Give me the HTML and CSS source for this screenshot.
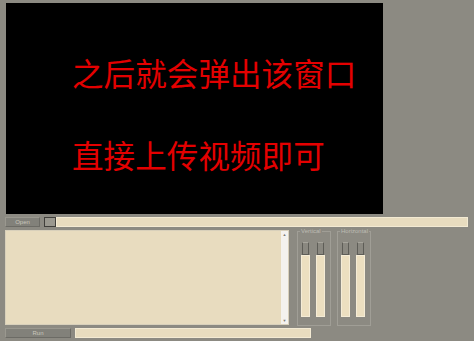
FILE: index.html
```html
<!DOCTYPE html>
<html>
<head>
<meta charset="utf-8">
<link rel="stylesheet" href="styles.css">
</head>
<body>
<div class="app">
  <div class="video">
    <p class="line l1">之后就会弹出该窗口</p>
    <p class="line l2">直接上传视频即可</p>
  </div>
  <div class="row open-row">
    <div class="btn open">Open</div>
    <div class="mini"></div>
    <div class="bar seek"></div>
  </div>
  <div class="row mid">
    <div class="text">
      <div class="scroll"><span class="arr">▲</span><span class="arr">▼</span></div>
    </div>
    <div class="group">
      <span class="legend">Vertical</span>
      <div class="slider"><div class="thumb"></div><div class="track"></div></div>
      <div class="slider"><div class="thumb"></div><div class="track"></div></div>
    </div>
    <div class="group">
      <span class="legend">Horizontal</span>
      <div class="slider"><div class="thumb"></div><div class="track"></div></div>
      <div class="slider"><div class="thumb"></div><div class="track"></div></div>
    </div>
  </div>
  <div class="row run-row">
    <div class="btn run">Run</div>
    <div class="bar status"></div>
  </div>
</div>
</body>
</html>
```
FILE: styles.css
```css
html, body {
  margin: 0;
  padding: 0;
  background: #8c8a82;
  width: 474px;
  height: 341px;
  overflow: hidden;
  font-family: "Liberation Sans", Arial, sans-serif;
}
.app {
  padding: 3px 0 0 5px;
}
.video {
  margin-left: 1px;
  width: 377px;
  height: 211px;
  background: #000;
  box-sizing: border-box;
  padding: 51px 0 0 66px;
}
.line {
  margin: 0;
  color: #e40000;
  font-family: "Noto Sans CJK SC", sans-serif;
  font-size: 31.5px;
  line-height: 36px;
  letter-spacing: 0.1px;
  white-space: nowrap;
}
.l2 {
  margin-top: 46px;
}
.row {
  display: flex;
}
.open-row {
  margin-top: 3px;
  height: 10px;
  align-items: stretch;
}
.btn {
  background: #82817a;
  border: 1px solid #9a988f;
  border-right-color: #6c6b65;
  border-bottom-color: #6c6b65;
  box-sizing: border-box;
  color: #c9c7bd;
  font-size: 6px;
  line-height: 8px;
  text-align: center;
}
.open {
  width: 35px;
}
.mini {
  margin-left: 4px;
  width: 12px;
  background: #9a988f;
  border: 1px solid #3f3e3a;
  box-sizing: border-box;
}
.bar {
  background: #e8dcbf;
  border: 1px solid #f3ead3;
  box-sizing: border-box;
}
.seek {
  width: 412px;
}
.mid {
  margin-top: 3px;
  height: 96px;
}
.text {
  width: 284px;
  height: 95px;
  background: #e8dcbf;
  border: 1px solid #d8d0bb;
  box-sizing: border-box;
  display: flex;
  justify-content: flex-end;
}
.scroll {
  width: 7px;
  background: #f4f2ee;
  display: flex;
  flex-direction: column;
  justify-content: space-between;
  align-items: center;
  padding: 1px 0;
}
.arr {
  font-size: 4px;
  line-height: 5px;
  color: #7d7b75;
}
.group {
  position: relative;
  margin-left: 8px;
  margin-top: 1px;
  width: 34px;
  height: 95px;
  border: 1px solid #a09e96;
  box-sizing: border-box;
  display: flex;
  gap: 6px;
  padding: 10px 0 0 3px;
}
.group + .group {
  margin-left: 6px;
}
.legend {
  position: absolute;
  top: -4px;
  left: 2px;
  padding: 0 1px;
  background: #8c8a82;
  color: #bdbbb2;
  font-size: 6px;
  line-height: 7px;
}
.slider {
  width: 9px;
  display: flex;
  flex-direction: column;
}
.thumb {
  height: 13px;
  background: #8a8880;
  border: 1px solid #5e5d57;
  border-top-color: #a6a49b;
  box-sizing: border-box;
  margin: 0 1px;
}
.track {
  height: 62px;
  background: #ecdfc0;
  border: 1px solid #f5ecd6;
  box-sizing: border-box;
}
.run-row {
  margin-top: 2px;
  height: 10px;
}
.run {
  width: 66px;
}
.status {
  margin-left: 4px;
  width: 236px;
}
```
